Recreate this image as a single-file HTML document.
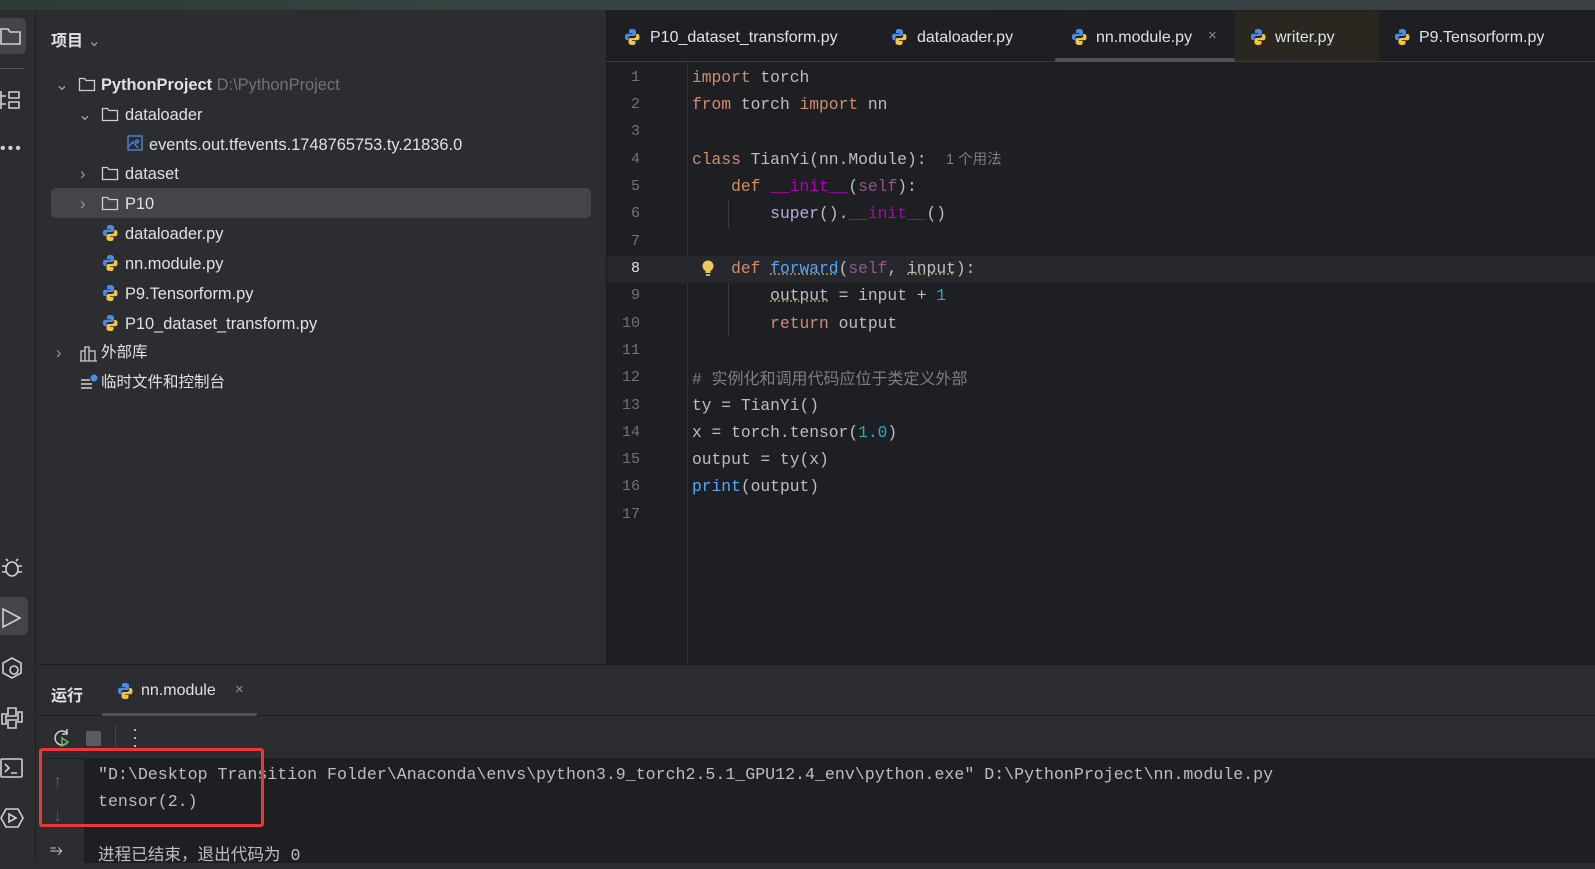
<!DOCTYPE html>
<html><head><meta charset="utf-8"><style>
*{margin:0;padding:0;box-sizing:border-box}
body{width:1595px;height:863px;overflow:hidden;background:#2b2d30;font-family:"Liberation Sans","Noto Sans CJK SC",sans-serif;color:#dfe1e5;position:relative}
.a{position:absolute}
.mono{font-family:"Liberation Mono","Noto Sans CJK SC",monospace;font-size:16.3px;white-space:pre}
.row{position:absolute;font-size:16.4px;height:30px;line-height:30px;white-space:nowrap}
.kw{color:#cf8e6d}.fn{color:#56a8f5}.sf{color:#94558d}.mg{color:#b200b2}.nm{color:#2aacb8}.cm{color:#7a7e85}
.ln{position:absolute;left:612px;width:28px;text-align:right;color:#6f737a;font-family:"Liberation Mono",monospace;font-size:15px}
.cl{position:absolute;left:692px}
.tab{position:absolute;top:29px;font-size:16px}
</style></head><body>
<div class="a" style="left:0;top:0;width:1595px;height:10px;background:linear-gradient(90deg,#2c3c38,#344644 40%,#3a3f44)"></div>
<!-- left strip -->
<div class="a" style="left:0;top:10px;width:36px;height:853px;background:#2b2d30;border-right:1px solid #1e1f22"></div>
<div class="a" style="left:-6px;top:18px;width:32px;height:36px;background:#43454a;border-radius:6px"></div>
<svg class="a" style="left:0;top:24px" width="24" height="24" fill="none" stroke="#ced0d6" stroke-width="1.6"><path d="M1 5h7l2 3h10v12H1z"/></svg>
<div class="a" style="left:0;top:68px;width:24px;height:1px;background:#4e5157"></div>
<svg class="a" style="left:0;top:88px" width="24" height="24" fill="none" stroke="#ced0d6" stroke-width="1.6"><path d="M1 3v18M1 8h5M1 16h5M9 4h10v6H9zM9 14h10v6H9z"/></svg>
<div class="a" style="left:0;top:140px;color:#ced0d6;font-size:16px;letter-spacing:2px">•••</div>
<svg class="a" style="left:0;top:556px" width="24" height="24" fill="none" stroke="#ced0d6" stroke-width="1.6"><ellipse cx="12" cy="13" rx="6" ry="7"/><path d="M2 10h4M2 16h4M18 10h4M18 16h4M8 5l-2-2M16 5l2-2"/></svg>
<div class="a" style="left:-6px;top:597px;width:34px;height:38px;background:#43454a;border-radius:6px"></div>
<svg class="a" style="left:0;top:606px" width="24" height="24" fill="none" stroke="#ced0d6" stroke-width="1.6"><path d="M3 3l17 9-17 9z"/></svg>
<svg class="a" style="left:0;top:656px" width="24" height="24" fill="none" stroke="#ced0d6" stroke-width="1.6"><path d="M12 2l9 5v10l-9 5-9-5V7z"/><circle cx="14" cy="14" r="4"/></svg>
<svg class="a" style="left:0;top:706px" width="24" height="24" fill="none" stroke="#ced0d6" stroke-width="1.6"><path d="M8 2h8v8H6v8H2V8h6zM16 22H8v-8h10V6h4v10h-6z"/></svg>
<svg class="a" style="left:0;top:756px" width="24" height="24" fill="none" stroke="#ced0d6" stroke-width="1.6"><rect x="1" y="3" width="21" height="18" rx="1"/><path d="M5 8l4 4-4 4M11 17h6"/></svg>
<svg class="a" style="left:0;top:806px" width="24" height="24" fill="none" stroke="#ced0d6" stroke-width="1.6"><path d="M6 3h12l5 9-5 9H6L1 12z"/><path d="M9 8l7 4-7 4z"/></svg>

<!-- project pane -->
<div class="a" style="left:51px;top:27px;font-size:16px;font-weight:bold">项目 <span style="font-weight:normal;color:#9a9da3">⌄</span></div>
<div class="a" style="left:51px;top:188px;width:540px;height:30px;background:#43454a;border-radius:5px"></div>
<svg width="0" height="0" style="position:absolute"><defs>
<g id="fd"><path d="M1.5 3.5h5l1.5 2h8.5v10h-15z" fill="none" stroke="#ced0d6" stroke-width="1.3"/></g>
<g id="py"><path d="M8 1c-3 0-3 1.3-3 2.5V5h3.5v.8H3C1.5 5.8 1 7 1 9s.7 3 2 3h1.3v-1.8C4.3 8.8 5.3 8 6.7 8h3.3c1.1 0 2-.9 2-2V3.5C12 2 10.6 1 8 1z" fill="#4a8be8"/><path d="M8.5 17c3 0 3-1.3 3-2.5V13H8v-.8h5.5c1.5 0 2-1.2 2-3.2s-.7-3-2-3h-1.3v1.8c0 1.4-1 2.2-2.4 2.2H6.5c-1.1 0-2 .9-2 2v2.5c0 1.5 1.4 2.5 4 2.5z" fill="#f5c542"/></g>
</defs></svg>
<div class="row" style="left:55px;top:70px;color:#9a9da3">⌄</div>
<svg class="a" style="left:78px;top:75px" width="18" height="18"><use href="#fd"/></svg>
<div class="row" style="left:101px;top:70px"><b>PythonProject</b> <span style="color:#6f737a">D:\PythonProject</span></div>
<div class="row" style="left:78px;top:100px;color:#9a9da3">⌄</div>
<svg class="a" style="left:101px;top:105px" width="18" height="18"><use href="#fd"/></svg>
<div class="row" style="left:125px;top:100px">dataloader</div>
<svg class="a" style="left:127px;top:135px" width="16" height="16" fill="none" stroke="#4a8be8" stroke-width="1.3"><rect x="1" y="1" width="14" height="14"/><path d="M1 12l5-5 5 6M10 5a1.5 1.5 0 1 0 .1 0"/></svg>
<div class="row" style="left:149px;top:130px">events.out.tfevents.1748765753.ty.21836.0</div>
<div class="row" style="left:80px;top:159px;color:#9a9da3">›</div>
<svg class="a" style="left:101px;top:164px" width="18" height="18"><use href="#fd"/></svg>
<div class="row" style="left:125px;top:159px">dataset</div>
<div class="row" style="left:80px;top:189px;color:#9a9da3">›</div>
<svg class="a" style="left:101px;top:194px" width="18" height="18"><use href="#fd"/></svg>
<div class="row" style="left:125px;top:189px">P10</div>
<svg class="a" style="left:102px;top:224px" width="17" height="18"><use href="#py"/></svg><div class="row" style="left:125px;top:219px">dataloader.py</div>
<svg class="a" style="left:102px;top:254px" width="17" height="18"><use href="#py"/></svg><div class="row" style="left:125px;top:249px">nn.module.py</div>
<svg class="a" style="left:102px;top:284px" width="17" height="18"><use href="#py"/></svg><div class="row" style="left:125px;top:279px">P9.Tensorform.py</div>
<svg class="a" style="left:102px;top:314px" width="17" height="18"><use href="#py"/></svg><div class="row" style="left:125px;top:309px">P10_dataset_transform.py</div>
<div class="row" style="left:56px;top:338px;color:#9a9da3">›</div>
<svg class="a" style="left:80px;top:345px" width="17" height="17" fill="none" stroke="#ced0d6" stroke-width="1.3"><path d="M1 16V6h4v10M5 16V2h4v14M9 16V6h6v10zM0 16h17"/></svg>
<div class="row" style="left:101px;top:338px;font-size:15.5px">外部库</div>
<svg class="a" style="left:80px;top:374px" width="18" height="17"><path d="M1 6h9M1 10h11M1 14h11" stroke="#ced0d6" stroke-width="1.4"/><circle cx="14" cy="4" r="3.5" fill="#4a8be8"/></svg>
<div class="row" style="left:101px;top:368px;font-size:15.5px">临时文件和控制台</div>

<!-- editor -->
<div class="a" style="left:606px;top:10px;width:989px;height:654px;background:#1e1f22;border-left:1px solid #1a1b1e"></div>
<div class="a" style="left:606px;top:61px;width:989px;height:1px;background:#393b40"></div>
<div class="a" style="left:1235px;top:11px;width:144px;height:50px;background:#29271f"></div>
<div class="a" style="left:1055px;top:58px;width:180px;height:4px;background:#4e5157;border-radius:2px"></div>
<svg class="a" style="left:624px;top:28px" width="17" height="18"><use href="#py"/></svg><div class="tab" style="left:650px">P10_dataset_transform.py</div>
<svg class="a" style="left:891px;top:28px" width="17" height="18"><use href="#py"/></svg><div class="tab" style="left:917px">dataloader.py</div>
<svg class="a" style="left:1071px;top:28px" width="17" height="18"><use href="#py"/></svg><div class="tab" style="left:1096px">nn.module.py</div>
<div class="a" style="left:1208px;top:27px;font-size:15px;color:#8c8f94">×</div>
<svg class="a" style="left:1250px;top:28px" width="17" height="18"><use href="#py"/></svg><div class="tab" style="left:1275px">writer.py</div>
<svg class="a" style="left:1394px;top:28px" width="17" height="18"><use href="#py"/></svg><div class="tab" style="left:1419px">P9.Tensorform.py</div>
<div class="a" style="left:687px;top:62px;width:1px;height:602px;background:#313236"></div>
<div class="a" style="left:607px;top:256px;width:988px;height:27px;background:#26282e"></div>
<div class="a" style="left:728px;top:200px;width:1px;height:28px;background:#3a3c40"></div>
<div class="a" style="left:728px;top:283px;width:1px;height:54px;background:#3a3c40"></div>
<div class="mono" style="position:absolute;left:0;top:0;line-height:27.3px;color:#bcbec4">
<div class="ln" style="top:64px">1</div><div class="ln" style="top:91px">2</div><div class="ln" style="top:118px">3</div><div class="ln" style="top:146px">4</div><div class="ln" style="top:173px">5</div><div class="ln" style="top:200px">6</div><div class="ln" style="top:228px">7</div><div class="ln" style="top:255px;color:#dfe1e5">8</div><div class="ln" style="top:282px">9</div><div class="ln" style="top:310px">10</div><div class="ln" style="top:337px">11</div><div class="ln" style="top:364px">12</div><div class="ln" style="top:392px">13</div><div class="ln" style="top:419px">14</div><div class="ln" style="top:446px">15</div><div class="ln" style="top:473px">16</div><div class="ln" style="top:501px">17</div>
<div class="cl" style="top:64px"><span class="kw">import</span> torch</div>
<div class="cl" style="top:91px"><span class="kw">from</span> torch <span class="kw">import</span> nn</div>
<div class="cl" style="top:146px"><span class="kw">class</span> TianYi(nn.Module):  <span class="cm" style="font-family:'Liberation Sans','Noto Sans CJK SC',sans-serif;font-size:14.5px">1 个用法</span></div>
<div class="cl" style="top:173px">    <span class="kw">def</span> <span class="mg">__init__</span>(<span class="sf">self</span>):</div>
<div class="cl" style="top:200px">        <span class="sf" style="color:#b3aee0">super</span>().<span class="mg">__init__</span>()</div>
<div class="cl" style="top:255px">    <span class="kw">def</span> <span class="fn" style="text-decoration:underline dotted #a98f4a">forward</span>(<span class="sf">self</span>, <span style="text-decoration:underline dotted #a98f4a">input</span>):</div>
<div class="cl" style="top:282px">        <span style="text-decoration:underline dotted #a98f4a">output</span> = input + <span class="nm">1</span></div>
<div class="cl" style="top:310px">        <span class="kw">return</span> output</div>
<div class="cl cm" style="top:364px"># <span style="font-family:'Noto Sans CJK SC',sans-serif;font-size:16px">实例化和调用代码应位于类定义外部</span></div>
<div class="cl" style="top:392px">ty = TianYi()</div>
<div class="cl" style="top:419px">x = torch.tensor(<span class="nm">1.0</span>)</div>
<div class="cl" style="top:446px">output = ty(x)</div>
<div class="cl" style="top:473px"><span class="fn">print</span>(output)</div>
</div>
<svg class="a" style="left:701px;top:259px" width="14" height="20"><circle cx="7" cy="7" r="5.5" fill="#f2c55c"/><rect x="4.5" y="11" width="5" height="3" fill="#f2c55c"/><rect x="5" y="15" width="4" height="2" fill="#aaa"/></svg>

<!-- bottom panel -->
<div class="a" style="left:37px;top:664px;width:1558px;height:199px;background:#2b2d30;border-top:1px solid #1e1f22"></div>
<div class="a" style="left:51px;top:682px;font-size:16px;font-weight:bold">运行</div>
<svg class="a" style="left:117px;top:682px" width="17" height="18"><use href="#py"/></svg>
<div class="a" style="left:141px;top:682px;font-size:16px">nn.module</div>
<div class="a" style="left:235px;top:681px;font-size:15px;color:#8c8f94">×</div>
<div class="a" style="left:37px;top:715px;width:1558px;height:1px;background:#1e1f22"></div>
<div class="a" style="left:102px;top:713px;width:155px;height:3px;background:#4e5157;border-radius:2px"></div>
<svg class="a" style="left:52px;top:728px" width="20" height="20" fill="none" stroke="#ced0d6" stroke-width="1.5"><path d="M15 5a7 7 0 1 0 0 10M15 1v5h-5"/><path d="M10 10l6 4-6 4z" stroke="#5fb865"/></svg>
<div class="a" style="left:86px;top:731px;width:15px;height:15px;background:#5a5d63;border-radius:2px"></div>
<div class="a" style="left:115px;top:725px;width:1px;height:24px;background:#43454a"></div>
<div class="a" style="left:132px;top:725px;color:#ced0d6;font-size:18px;line-height:8px">·<br>·<br>·</div>
<div class="a" style="left:84px;top:759px;width:1511px;height:104px;background:#1e1f22"></div>
<div class="a" style="left:37px;top:758px;width:1558px;height:1px;background:#1e1f22"></div>
<div class="a" style="left:53px;top:771px;color:#5a5d63;font-size:18px">↑</div>
<div class="a" style="left:53px;top:805px;color:#5a5d63;font-size:18px">↓</div>
<div class="a" style="left:50px;top:842px;color:#ced0d6;font-size:16px">⥱</div>
<div class="mono" style="position:absolute;left:98px;top:761px;line-height:27px;color:#bcbec4;font-size:16.6px">"D:\Desktop Transition Folder\Anaconda\envs\python3.9_torch2.5.1_GPU12.4_env\python.exe" D:\PythonProject\nn.module.py
tensor(2.)

<span style="font-family:'Liberation Mono','Noto Sans CJK SC',monospace">进程已结束，退出代码为 0</span></div>
<div class="a" style="left:39px;top:748px;width:225px;height:79px;border:3px solid #e9373a;border-radius:3px"></div>
</body></html>
